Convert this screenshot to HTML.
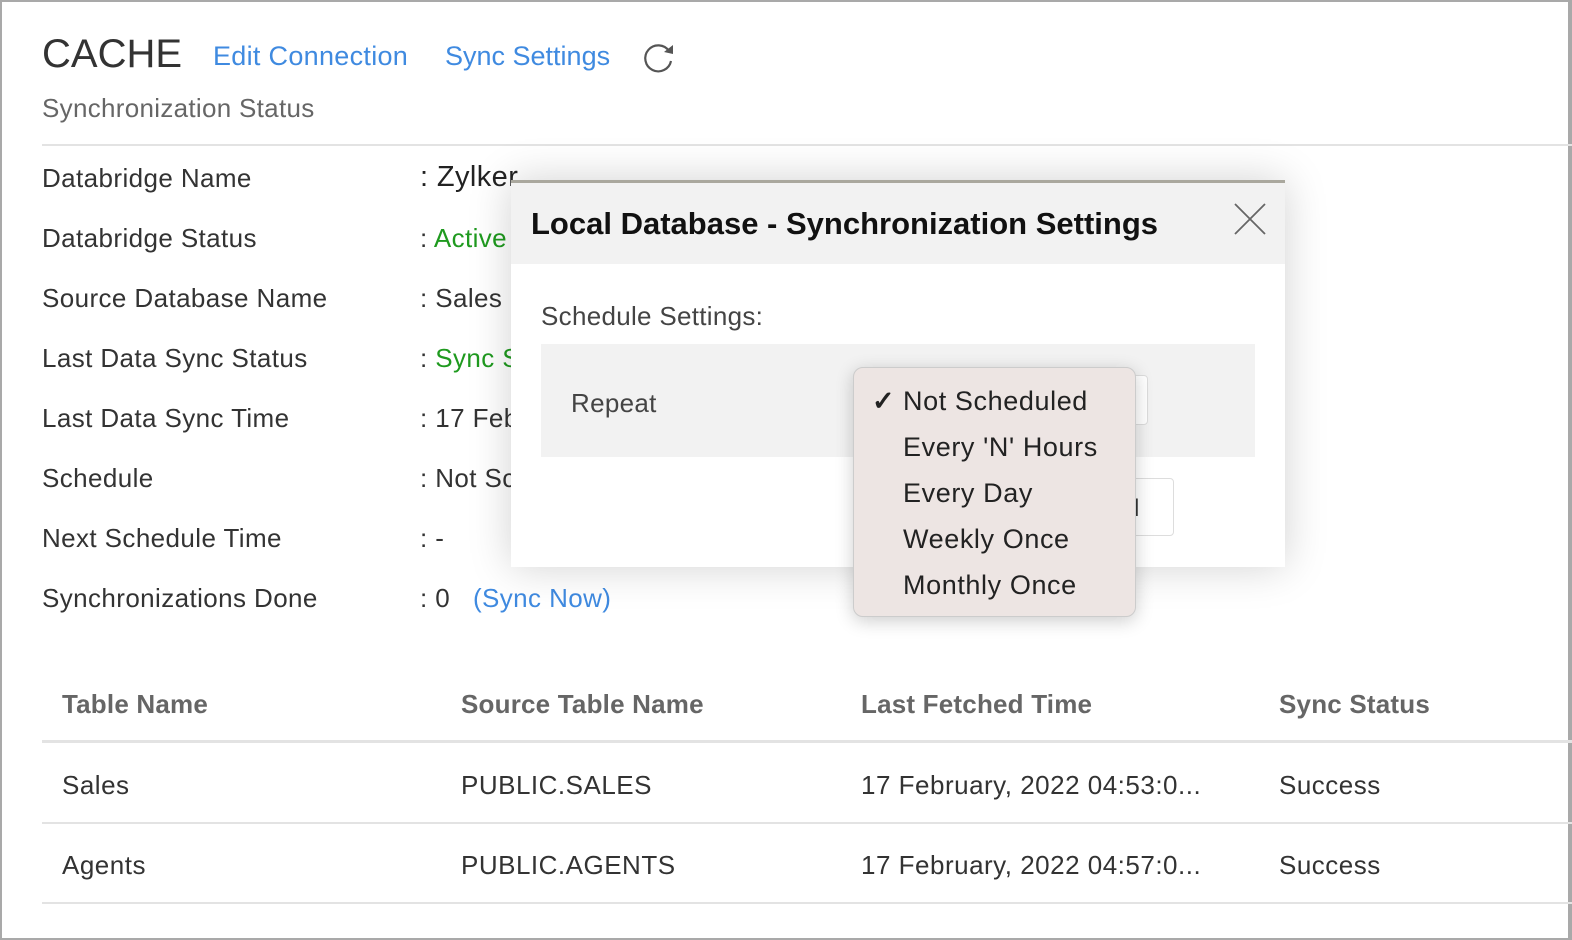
<!DOCTYPE html>
<html><head><meta charset="utf-8"><style>
*{margin:0;padding:0;box-sizing:border-box}
body{width:1572px;height:940px;position:relative;overflow:hidden;background:#fff;font-family:"Liberation Sans",sans-serif;color:#333}
.frame{position:absolute;left:0;top:0;width:1572px;height:940px;border:2px solid #a9a9a9;border-right-width:4px}
.a{position:absolute;white-space:nowrap;line-height:1}
.lbl{font-size:26px;color:#333;letter-spacing:0.4px}
.blue{color:#3f8ae0}
.green{color:#1f9a1f}
.th{font-size:26px;font-weight:bold;color:#666;letter-spacing:0.2px}
.td{font-size:26px;color:#333;letter-spacing:0.5px}
.hr{position:absolute;left:42px;right:0;background:#e3e3e3}
</style></head><body>
<div class="frame"></div>
<div class="a" style="left:42px;top:34px;font-size:40px;color:#333">CACHE</div>
<div class="a blue" style="left:213px;top:43px;font-size:27px;letter-spacing:0.3px">Edit Connection</div>
<div class="a blue" style="left:445px;top:43px;font-size:27px">Sync Settings</div>
<svg class="a" style="left:641px;top:41px" width="36" height="34" viewBox="0 0 36 34"><path d="M28 10 A13 13 0 1 0 30 20" fill="none" stroke="#555" stroke-width="2.2"/><path d="M23 11 L32 4 L32 13 Z" fill="#555"/></svg>
<div class="a" style="left:42px;top:95px;font-size:26px;color:#666;letter-spacing:0.3px">Synchronization Status</div>
<div class="hr" style="top:144px;height:2px"></div>

<div class="a lbl" style="left:42px;top:165px">Databridge Name</div><div class="a lbl" style="left:420px;top:163px;font-size:29px;color:#222">: Zylker</div>
<div class="a lbl" style="left:42px;top:225px">Databridge Status</div><div class="a lbl" style="left:420px;top:225px">: <span class="green">Active</span></div>
<div class="a lbl" style="left:42px;top:285px">Source Database Name</div><div class="a lbl" style="left:420px;top:285px">: Sales</div>
<div class="a lbl" style="left:42px;top:345px">Last Data Sync Status</div><div class="a lbl" style="left:420px;top:345px">: <span class="green">Sync S</span></div>
<div class="a lbl" style="left:42px;top:405px">Last Data Sync Time</div><div class="a lbl" style="left:420px;top:405px">: 17 Feb</div>
<div class="a lbl" style="left:42px;top:465px">Schedule</div><div class="a lbl" style="left:420px;top:465px">: Not Sc</div>
<div class="a lbl" style="left:42px;top:525px">Next Schedule Time</div><div class="a lbl" style="left:420px;top:525px">: -</div>
<div class="a lbl" style="left:42px;top:585px">Synchronizations Done</div><div class="a lbl" style="left:420px;top:585px">: 0 &nbsp;&nbsp;<span class="blue">(Sync Now)</span></div>

<div class="a th" style="left:62px;top:691px">Table Name</div>
<div class="a th" style="left:461px;top:691px">Source Table Name</div>
<div class="a th" style="left:861px;top:691px">Last Fetched Time</div>
<div class="a th" style="left:1279px;top:691px">Sync Status</div>
<div class="hr" style="top:740px;height:3px"></div>
<div class="a td" style="left:62px;top:772px">Sales</div>
<div class="a td" style="left:461px;top:772px">PUBLIC.SALES</div>
<div class="a td" style="left:861px;top:772px">17 February, 2022 04:53:0...</div>
<div class="a td" style="left:1279px;top:772px">Success</div>
<div class="hr" style="top:822px;height:2px"></div>
<div class="a td" style="left:62px;top:852px">Agents</div>
<div class="a td" style="left:461px;top:852px">PUBLIC.AGENTS</div>
<div class="a td" style="left:861px;top:852px">17 February, 2022 04:57:0...</div>
<div class="a td" style="left:1279px;top:852px">Success</div>
<div class="hr" style="top:902px;height:2px"></div>

<!-- modal -->
<div style="position:absolute;left:511px;top:180px;width:774px;height:387px;background:#fff;border-top:3px solid #aaa89e;box-shadow:0 0 40px rgba(0,0,0,.18)">
 <div style="height:81px;background:#f2f2f2;position:relative">
  <div class="a" style="left:20px;top:25px;font-size:31px;font-weight:bold;color:#111">Local Database - Synchronization Settings</div>
  <svg class="a" style="left:723px;top:20px" width="32" height="32"><path d="M1 1 L31 31 M31 1 L1 31" stroke="#666" stroke-width="1.8"/></svg>
 </div>
 <div class="a" style="left:30px;top:120px;font-size:26px;color:#444;letter-spacing:0.3px">Schedule Settings:</div>
 <div style="position:absolute;left:30px;top:161px;width:714px;height:113px;background:#f2f2f2"></div>
 <div class="a" style="left:60px;top:207px;font-size:26px;color:#444;letter-spacing:0.3px">Repeat</div>
 <div style="position:absolute;left:560px;top:192px;width:77px;height:50px;border:1px solid #ddd;border-radius:4px;background:#fff"></div>
 <div style="position:absolute;left:600px;top:295px;width:63px;height:58px;border:1px solid #ddd;border-radius:4px;background:#fff"><div class="a" style="left:22px;top:18px;font-size:24px">l</div></div>
</div>
<!-- dropdown -->
<div style="position:absolute;left:853px;top:367px;width:283px;height:250px;background:#ede5e3;border:1px solid #ccc;border-radius:10px;box-shadow:0 4px 18px rgba(0,0,0,.2);font-size:27px;color:#222;letter-spacing:0.6px">
 <div class="a" style="left:18px;top:20px;font-weight:bold">✓</div>
 <div class="a" style="left:49px;top:20px">Not Scheduled</div>
 <div class="a" style="left:49px;top:66px">Every 'N' Hours</div>
 <div class="a" style="left:49px;top:112px">Every Day</div>
 <div class="a" style="left:49px;top:158px">Weekly Once</div>
 <div class="a" style="left:49px;top:204px">Monthly Once</div>
</div>
</body></html>
